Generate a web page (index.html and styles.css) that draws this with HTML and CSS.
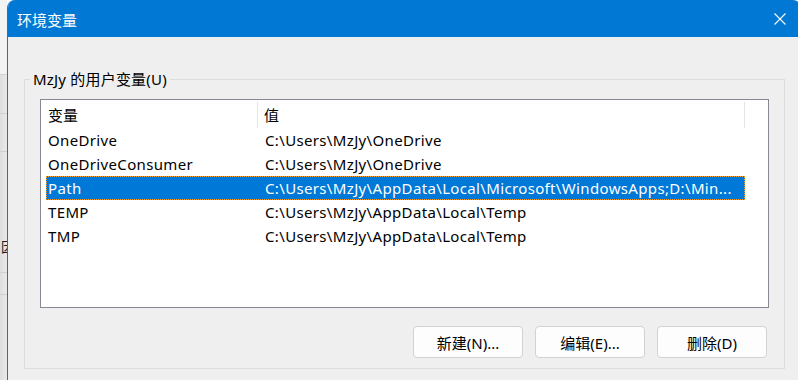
FILE: index.html
```html
<!DOCTYPE html>
<html lang="zh-CN">
<head>
    <meta charset="UTF-8">
    <title>环境变量</title>
    <link rel="stylesheet" href="styles.css">
</head>
<body>

    <div class="screen">
        <!-- window behind the dialog -->
        <div class="behind">
            <div class="behind-top"></div>
            <div class="behind-panel"></div>
            <div class="behind-row"></div>
            <div class="behind-row tall"><span class="behind-text">因</span></div>
            <div class="behind-row short"></div>
            <div class="behind-rest"></div>
        </div>

        <div class="dialog">
            <div class="titlebar">
                <span class="title">环境变量</span>
                <span class="close">
                    <svg width="12" height="12" viewBox="0 0 12 12">
                        <path d="M0.5 0.5 L11.5 11.5 M11.5 0.5 L0.5 11.5" stroke="#fff" stroke-width="1.1" fill="none"/>
                    </svg>
                </span>
            </div>

            <div class="content">
                <fieldset class="group">
                    <legend>MzJy 的用户变量(U)</legend>

                    <div class="listview">
                        <div class="lv-header">
                            <div class="hcell name">变量</div>
                            <div class="hcell value">值</div>
                        </div>
                        <div class="lv-body">
                            <div class="lv-row"><span class="cell name">OneDrive</span><span class="cell value">C:\Users\MzJy\OneDrive</span></div>
                            <div class="lv-row"><span class="cell name">OneDriveConsumer</span><span class="cell value">C:\Users\MzJy\OneDrive</span></div>
                            <div class="lv-row selected"><span class="cell name">Path</span><span class="cell value">C:\Users\MzJy\AppData\Local\Microsoft\WindowsApps;D:\Min...</span></div>
                            <div class="lv-row"><span class="cell name">TEMP</span><span class="cell value">C:\Users\MzJy\AppData\Local\Temp</span></div>
                            <div class="lv-row"><span class="cell name">TMP</span><span class="cell value">C:\Users\MzJy\AppData\Local\Temp</span></div>
                        </div>
                    </div>

                    <div class="buttons">
                        <button class="btn">新建(N)...</button>
                        <button class="btn">编辑(E)...</button>
                        <button class="btn">删除(D)</button>
                    </div>
                </fieldset>
            </div>
        </div>
    </div>

</body>
</html>
```

FILE: styles.css
```css
/* Windows "environment variables" dialog */
body {
    margin: 0;
    background-color: #ffffff;
    font-family: 'Noto Sans', 'Noto Sans CJK SC', sans-serif;
    font-size: 15px;
    color: #000;
}

.screen {
    display: flex;
    width: 798px;
    height: 380px;
    overflow: hidden;
}

/* Window peeking out on the left */
.behind {
    width: 7px;
    flex-shrink: 0;
    display: flex;
    flex-direction: column;
    background: linear-gradient(to right, #dedede, #e9e9e9);
}

.behind-top {
    height: 74px;
    background-color: #f3f3f3;
    border-bottom: 1px solid #d4d4d4;
}

.behind-panel {
    height: 38px;
    border-bottom: 1px solid #cfcfcf;
}

.behind-row {
    height: 37px;
    border-bottom: 1px solid #cfcfcf;
}

.behind-row.tall {
    height: 120px;
    position: relative;
    overflow: hidden;
}

.behind-text {
    position: absolute;
    right: -8px;
    top: 86px;
    font-family: 'Noto Sans CJK SC', sans-serif;
    font-size: 14px;
    line-height: 16px;
    color: #1a1a1a;
}

.behind-row.short {
    height: 21px;
}

.behind-rest {
    flex: 1;
}

/* Dialog */
.dialog {
    width: 793px;
    flex-shrink: 0;
    display: flex;
    flex-direction: column;
    border-left: 1px solid #1a73c8;
    border-radius: 8px 8px 0 0;
    overflow: hidden;
    background-color: #efefef;
}

.titlebar {
    height: 37px;
    flex-shrink: 0;
    display: flex;
    align-items: center;
    justify-content: space-between;
    background-color: #0078d4;
    color: #ffffff;
    padding: 0 15px 0 9px;
}

.title {
    font-family: 'Noto Sans CJK SC', sans-serif;
    font-size: 15px;
    margin-top: 1px;
}

.close {
    display: flex;
    margin-top: 1px;
}

.content {
    flex: 1;
    padding: 32px 0 0 16px;
}

/* Group box */
.group {
    margin: 0;
    width: 729px;
    height: 288px;
    padding: 10px 15px 0 15px;
    border: 1px solid #dcdcdc;
}

.group legend {
    margin-left: -10px;
    padding: 0 3px;
    line-height: 20px;
    font-size: 15px;
    letter-spacing: 0.2px;
}

/* List view */
.listview {
    height: 207px;
    border: 1px solid #888892;
    background-color: #ffffff;
}

.lv-header {
    display: flex;
    height: 28px;
}

.hcell {
    margin-top: 2px;
    height: 26px;
    line-height: 26px;
    border-right: 1px solid #e5e5e5;
    font-family: 'Noto Sans CJK SC', sans-serif;
}

.hcell.name {
    width: 209px;
    padding-left: 7px;
}

.hcell.value {
    width: 480px;
    padding-left: 6px;
}

.lv-body {
    padding-left: 5px;
}

.lv-row {
    display: flex;
    width: 699px;
    height: 24px;
    line-height: 23px;
    box-sizing: border-box;
    border: 1px solid transparent;
    white-space: nowrap;
    letter-spacing: 0.35px;
}

.cell {
    padding-left: 1px;
}

.cell.name {
    width: 216px;
}

.cell.value {
    flex: 1;
    overflow: hidden;
}

.lv-row.selected {
    background-color: #0078d7;
    color: #ffffff;
    border: 1px dotted #f5a12a;
}

/* Buttons */
.buttons {
    display: flex;
    justify-content: flex-end;
    gap: 12px;
    margin-top: 18px;
    padding-right: 2px;
}

.btn {
    width: 110px;
    height: 32px;
    background-color: #fdfdfd;
    border: 1px solid #d2d2d2;
    border-radius: 4px;
    font-family: 'Noto Sans', 'Noto Sans CJK SC', sans-serif;
    font-size: 15px;
    color: #000;
    padding: 0;
}
```
